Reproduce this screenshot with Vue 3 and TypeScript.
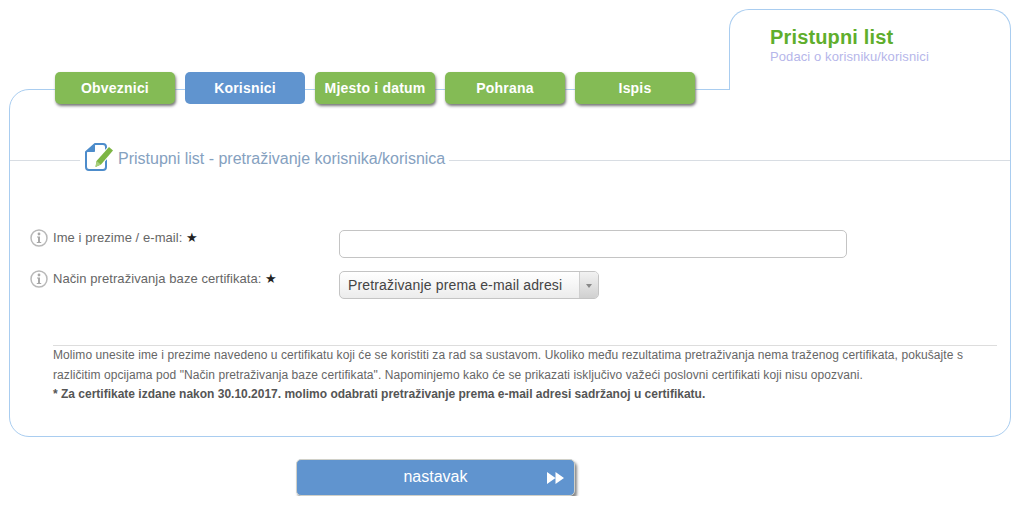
<script setup lang="ts">
const tabs: { label: string; active?: boolean }[] = [
  { label: 'Obveznici' },
  { label: 'Korisnici', active: true },
  { label: 'Mjesto i datum' },
  { label: 'Pohrana' },
  { label: 'Ispis' },
]
const fields = ['Ime i prezime / e-mail:', 'Način pretraživanja baze certifikata:']
</script>

<template>
  <div class="page">
    <div class="head">
      <nav class="tabs">
        <a v-for="t in tabs" :key="t.label" class="tab" :class="{ active: t.active }">{{ t.label }}</a>
      </nav>
      <div class="app-tab">
        <h1>Pristupni list</h1>
        <p>Podaci o korisniku/korisnici</p>
      </div>
    </div>

    <main class="panel">
      <div class="section">
        <span class="line short"></span>
        <svg class="doc" width="30" height="30" viewBox="0 0 30 30">
          <path d="M11 2h8a3 3 0 0 1 3 3v20a3 3 0 0 1-3 3H5a3 3 0 0 1-3-3V10z" fill="none" stroke="#4d8ccb" stroke-width="2" stroke-linejoin="round"/>
          <path d="M10.500 2.500V9.500H3z" fill="#4d8ccb" stroke="#4d8ccb" stroke-linejoin="round"/>
          <path d="M25 5l4 3.500-12 14-5.500 2.500 1-6z" fill="#7db544" stroke="#fff" stroke-width="2" paint-order="stroke" stroke-linejoin="round"/>
          <path d="M12.500 19l4.500 3.500-5.500 2.500z" fill="#a9cf7e"/>
        </svg>
        <h2>Pristupni list - pretraživanje korisnika/korisnica</h2>
        <span class="line"></span>
      </div>

      <form class="form" @submit.prevent>
        <div class="row">
          <label class="label">
            <svg class="info" width="18" height="18" viewBox="0 0 18 18">
              <circle cx="9" cy="9" r="8" fill="none" stroke="#b8b8b8" stroke-width="1.500"/>
              <circle cx="9" cy="5" r="1.400" fill="#a8a8a8"/>
              <path d="M7 7.500h3v5.500h1.200v1H6.800v-1H8V8.500H7z" fill="#a8a8a8"/>
            </svg>
            <span>{{ fields[0] }} <i>★</i></span>
          </label>
          <input class="input" type="text" />
        </div>
        <div class="row">
          <label class="label">
            <svg class="info" width="18" height="18" viewBox="0 0 18 18">
              <circle cx="9" cy="9" r="8" fill="none" stroke="#b8b8b8" stroke-width="1.500"/>
              <circle cx="9" cy="5" r="1.400" fill="#a8a8a8"/>
              <path d="M7 7.500h3v5.500h1.200v1H6.800v-1H8V8.500H7z" fill="#a8a8a8"/>
            </svg>
            <span>{{ fields[1] }} <i>★</i></span>
          </label>
          <div class="select">
            <span class="value">Pretraživanje prema e-mail adresi</span>
            <span class="arrow"></span>
          </div>
        </div>
      </form>

      <div class="note">
        <p class="plain">Molimo unesite ime i prezime navedeno u certifikatu koji će se koristiti za rad sa sustavom. Ukoliko među rezultatima pretraživanja nema traženog certifikata, pokušajte s različitim opcijama pod "Način pretraživanja baze certifikata". Napominjemo kako će se prikazati isključivo važeći poslovni certifikati koji nisu opozvani.</p>
        <p><b>* Za certifikate izdane nakon 30.10.2017. molimo odabrati pretraživanje prema e-mail adresi sadržanoj u certifikatu.</b></p>
      </div>
    </main>

    <div class="actions">
      <button class="next" type="button">
        <span>nastavak</span>
        <svg class="ff" width="17" height="12" viewBox="0 0 17 12">
          <path d="M0 0l8.500 6L0 12zM8.500 0L17 6l-8.500 6z" fill="#fff"/>
        </svg>
      </button>
    </div>
  </div>
</template>

<style>
html, body { margin: 0; background: #fff; }
</style>

<style scoped>
.page {
  width: 1002px;
  margin-left: 9px;
  padding-top: 9px;
  font-family: "Liberation Sans", Arial, sans-serif;
}
.head {
  position: relative;
  z-index: 1;
  display: flex;
  align-items: flex-end;
  justify-content: space-between;
  height: 81px;
  margin-bottom: -1px;
}
.tabs {
  display: flex;
  gap: 10px;
  margin-left: 46px;
  margin-bottom: -14px;
}
.tab {
  width: 120px;
  height: 32px;
  line-height: 32px;
  text-align: center;
  border-radius: 5px;
  background: #84bb55;
  color: #fff;
  font-size: 14px;
  font-weight: 700;
  letter-spacing: 0.2px;
  box-shadow: 1px 2px 3px #777;
}
.tab.active {
  background: #6094cf;
  box-shadow: none;
}
.app-tab {
  box-sizing: border-box;
  width: 282px;
  height: 81px;
  padding: 16px 0 0 40px;
  background: #fff;
  border: 1px solid #a9cdf0;
  border-bottom: 0;
  border-radius: 20px 20px 0 0;
}
.app-tab h1 {
  margin: 0;
  font-size: 20px;
  line-height: 22px;
  font-weight: 700;
  letter-spacing: 0.15px;
  color: #5fae2c;
}
.app-tab p {
  margin: 2px 0 0;
  font-size: 13px;
  line-height: 14px;
  letter-spacing: 0.1px;
  color: #b6b6ea;
}
.panel {
  box-sizing: border-box;
  height: 348px;
  border: 1px solid #a9cdf0;
  border-radius: 20px 0 20px 20px;
  padding-top: 51px;
}
.section {
  display: flex;
  align-items: center;
  height: 36px;
}
.section h2 {
  margin: 0 4px 0 4px;
  font-size: 16px;
  line-height: 20px;
  font-weight: 400;
  color: #85a1bf;
  white-space: nowrap;
}
.line {
  flex: 1;
  height: 1px;
  background: #d8dde3;
  position: relative;
  top: 1px;
}
.line.short {
  flex: none;
  width: 70px;
  margin-right: 4px;
}
.doc { flex: none; margin-top: -4px; }
.form {
  margin-top: 53px;
  display: flex;
  flex-direction: column;
  gap: 13px;
}
.row {
  display: flex;
  align-items: flex-start;
  padding-left: 20px;
}
.label {
  display: flex;
  align-items: flex-start;
  gap: 5px;
  width: 309px;
  font-size: 13px;
  line-height: 16px;
  letter-spacing: 0.07px;
  color: #666;
}
.label i { font-style: normal; color: #222; }
.info { flex: none; margin-top: -1px; }
.input {
  box-sizing: border-box;
  width: 508px;
  height: 28px;
  margin: 0;
  border: 1px solid #c4c4c4;
  border-radius: 5px;
  background: #fff;
  outline: none;
}
.select {
  box-sizing: border-box;
  display: flex;
  width: 260px;
  height: 28px;
  border: 1px solid #c4c4c4;
  border-radius: 5px;
  background: linear-gradient(#fff, #ececec);
  overflow: hidden;
}
.value {
  flex: 1;
  padding-left: 8px;
  font-size: 14px;
  line-height: 26px;
  letter-spacing: 0.15px;
  color: #444;
}
.arrow {
  position: relative;
  flex: none;
  width: 18px;
  border-left: 1px solid #cfcfcf;
  background: linear-gradient(#f2f2f2, #d0d0d0);
}
.arrow::after {
  content: "";
  position: absolute;
  left: 6px;
  top: 12px;
  border: 3px solid transparent;
  border-top: 4px solid #888;
  border-bottom: 0;
}
.note {
  margin: 46px 13px 0 43px;
  border-top: 1px solid #ddd;
  font-size: 12px;
  line-height: 19.500px;
  color: #666;
}
.note p { margin: 0; }
.note .plain { letter-spacing: 0.08px; }
.note b { color: #555; }
.actions {
  padding: 22px 0 0 287px;
}
.next {
  position: relative;
  box-sizing: border-box;
  display: block;
  width: 279px;
  height: 37px;
  margin: 0;
  padding: 0 0 1px;
  border: 1px solid #d0d0c8;
  border-radius: 5px;
  background: #6094cf;
  box-shadow: 2px 3px 3px #888;
  color: #fff;
  font-family: inherit;
  font-size: 16px;
}
.ff {
  position: absolute;
  right: 10px;
  top: 12px;
}
</style>
